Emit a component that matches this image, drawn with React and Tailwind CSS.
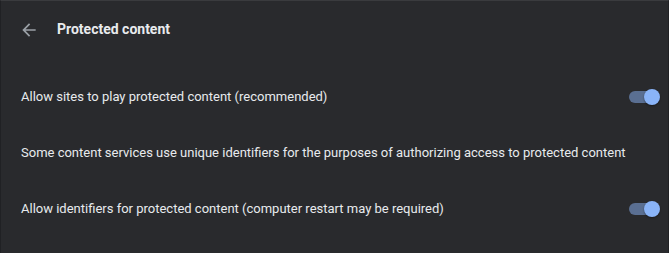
import React from "react";

function Toggle() {
  return (
    <div className="relative w-[32px] h-[16px] flex items-center shrink-0">
      <div className="w-[26px] h-[12px] rounded-full bg-[#5a6f92] ml-[1px]" />
      <div className="absolute right-0 top-0 w-[16px] h-[16px] rounded-full bg-[#8ab4f8] shadow-[0_1px_2px_rgba(0,0,0,0.4)]" />
    </div>
  );
}

export default function App() {
  return (
    <div
      className="w-[669px] h-[253px] bg-[#292a2d] text-[#e8eaed] border-t border-t-[#3a3b3e] border-x border-x-[#202124] flex flex-col"
      style={{ fontFamily: "Roboto, 'Liberation Sans', sans-serif" }}
    >
      <div className="h-[57px] flex items-center pl-[18px]">
        <svg width="20" height="20" viewBox="0 0 24 24" className="text-[#9aa0a6]">
          <path fill="currentColor" d="M20 11H7.83l5.59-5.59L12 4l-8 8 8 8 1.41-1.41L7.83 13H20v-2z" />
        </svg>
        <div className="ml-[18px] text-[14px] font-bold text-[#e8eaed]">Protected content</div>
      </div>
      <div className="h-[56px] flex items-center justify-between pl-[20px] pr-[8px] pt-[22px]">
        <span className="text-[13px]">Allow sites to play protected content (recommended)</span>
        <Toggle />
      </div>
      <div className="h-[56px] flex items-center pl-[20px] pt-[22px]">
        <span className="text-[13px]">Some content services use unique identifiers for the purposes of authorizing access to protected content</span>
      </div>
      <div className="h-[56px] flex items-center justify-between pl-[20px] pr-[8px] pt-[22px]">
        <span className="text-[13px]">Allow identifiers for protected content (computer restart may be required)</span>
        <Toggle />
      </div>
    </div>
  );
}
